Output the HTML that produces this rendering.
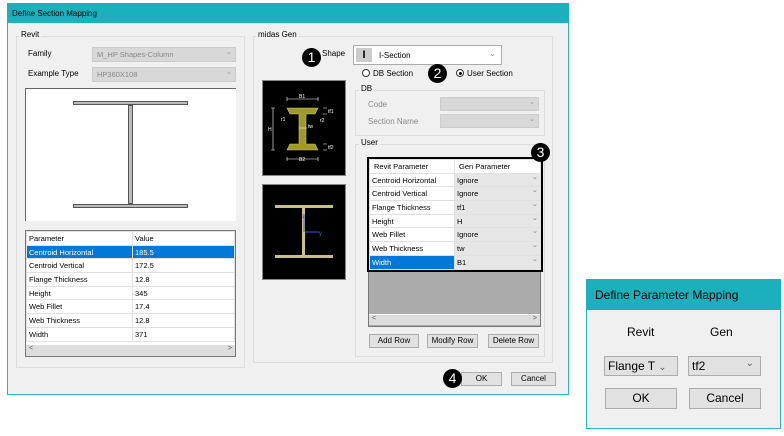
<!DOCTYPE html>
<html><head><style>
*{box-sizing:border-box;margin:0;padding:0}
body{width:784px;height:436px;background:#fff;position:relative;font-family:"Liberation Sans",sans-serif;font-size:8px;color:#000;overflow:hidden}
.a{position:absolute}
.grp{position:absolute;border:1px solid #dcdcdc}
.lbl{position:absolute;background:#f0f0f0;padding:0 2px;font-size:8px}
.cb{position:absolute;background:#d8d8d8;border:1px solid #ccc;color:#888;font-size:7.5px;padding:2px 4px}
.cb:after{content:"⌄";position:absolute;right:3px;top:-1px;color:#999}
.btn{position:absolute;background:#e1e1e1;border:1px solid #adadad;text-align:center;font-size:8px}
.num{position:absolute;width:19px;height:19px;border-radius:50%;background:#000;color:#fff;font-size:14px;text-align:center;line-height:19px}
table{border-collapse:collapse;font-size:7.5px}
td{height:13.7px;border:1px solid #e0e0e0;padding:0 2px;white-space:nowrap}
.sel td{background:#0078d7;color:#fff}
.dd{background:#e6e6e6;position:relative}
.dd:after{content:"⌄";position:absolute;right:2px;top:-2px;color:#888}
</style></head><body>
<div class="a" style="left:7px;top:3px;width:562px;height:392px;background:#f0f0f0;border:1px solid #2bb5c0"></div>
<div class="a" style="left:7px;top:3px;width:562px;height:20px;background:#1bb0bc;color:#000;font-size:8px;padding:6px 5px">Define Section Mapping</div>

<div class="grp" style="left:16px;top:36px;width:229px;height:332px"></div>
<div class="lbl" style="left:19px;top:30px">Revit</div>
<div class="a" style="left:28px;top:49px">Family</div>
<div class="cb" style="left:92px;top:47px;width:144px;height:15px">M_HP Shapes-Column</div>
<div class="a" style="left:28px;top:69px">Example Type</div>
<div class="cb" style="left:92px;top:67px;width:144px;height:15px">HP360X108</div>
<div class="a" style="left:25px;top:88px;width:211px;height:133px;background:#fff;border-top:1px solid #666;border-left:1px solid #666"></div>
<div class="a" style="left:73px;top:101px;width:115px;height:4px;background:#bbb;border:1px solid #555"></div>
<div class="a" style="left:128px;top:105px;width:5px;height:99px;background:#bbb;border:1px solid #555"></div>
<div class="a" style="left:73px;top:204px;width:115px;height:4px;background:#bbb;border:1px solid #555"></div>

<div class="a" style="left:25px;top:230px;width:211px;height:127px;background:#fff;border:1px solid #777">
<table style="width:209px"><tr><td style="width:106px;height:12px">Parameter</td><td>Value</td></tr>
<tr class="sel"><td>Centroid Horizontal</td><td>185.5</td></tr>
<tr><td>Centroid Vertical</td><td>172.5</td></tr>
<tr><td>Flange Thickness</td><td>12.8</td></tr>
<tr><td>Height</td><td>345</td></tr>
<tr><td>Web Fillet</td><td>17.4</td></tr>
<tr><td>Web Thickness</td><td>12.8</td></tr>
<tr><td>Width</td><td>371</td></tr></table>
<div class="a" style="left:0;top:114px;width:209px;height:11px;background:#ddd;font-size:7px;color:#555;padding:0 3px">&lt;<span style="float:right">&gt;</span></div>
</div>

<div class="grp" style="left:253px;top:36px;width:300px;height:327px"></div>
<div class="lbl" style="left:256px;top:30px">midas Gen</div>
<div class="num" style="left:302px;top:48px">1</div>
<div class="a" style="left:322px;top:49px">Shape</div>
<div class="a" style="left:353px;top:45px;width:149px;height:20px;background:#fff;border:1px solid #aaa;padding:5px 0 0 25px">I-Section<span style="position:absolute;right:5px;top:3px;color:#888">⌄</span></div>
<div class="a" style="left:356px;top:48px;width:16px;height:14px;background:#ccc;font-weight:bold;font-size:11px;text-align:center;line-height:14px">I</div>
<div class="a" style="left:362px;top:69px;width:8px;height:8px;border:1px solid #333;border-radius:50%;background:#fff"></div>
<div class="a" style="left:373px;top:69px">DB Section</div>
<div class="num" style="left:428px;top:64px">2</div>
<div class="a" style="left:456px;top:69px;width:8px;height:8px;border:1px solid #333;border-radius:50%;background:#fff"><div style="margin:1.5px;width:3px;height:3px;border-radius:50%;background:#000"></div></div>
<div class="a" style="left:467px;top:69px">User Section</div>

<div class="a" style="left:262px;top:80px;width:84px;height:96px;background:#000;border:1px solid #888">
<svg width="84" height="96"><path d="M24 27h31l-3 6h-9v30h9l3 6H24l3-6h9V33h-9z" fill="#a09a28" stroke="#cbc47a" stroke-width=".6"/>
<g stroke="#fff" stroke-width=".6" fill="none"><path d="M24 18h31M24 16v4M55 16v4M24 78h31M24 76v4M55 76v4M10 27v42M8 27h4M8 69h4M60 27h4M60 33h4M60 63h4M60 69h4M36 47h8"/></g>
<g fill="#fff" font-size="5"><text x="36" y="17">B1</text><text x="36" y="80">B2</text><text x="5" y="50">H</text><text x="65" y="32">tf1</text><text x="65" y="68">tf2</text><text x="18" y="40">r1</text><text x="57" y="41">r2</text><text x="45" y="47">tw</text></g></svg></div>
<div class="a" style="left:262px;top:184px;width:84px;height:96px;background:#000;border:1px solid #888">
<svg width="84" height="96"><g fill="#c8c088"><rect x="12" y="20" width="58" height="3"/><rect x="12" y="70" width="58" height="3"/><rect x="39" y="23" width="3" height="47"/></g><path d="M42 47h14M41 47V30" stroke="#3a5ae0" stroke-width="1"/><text x="56" y="50" fill="#3a5ae0" font-size="6">y</text><text x="39" y="33" fill="#3a5ae0" font-size="6">z</text></svg></div>

<div class="grp" style="left:355px;top:90px;width:190px;height:46px"></div>
<div class="lbl" style="left:359px;top:84px">DB</div>
<div class="a" style="left:368px;top:100px;color:#888">Code</div>
<div class="cb" style="left:440px;top:97px;width:99px;height:14px"></div>
<div class="a" style="left:368px;top:117px;color:#888">Section Name</div>
<div class="cb" style="left:440px;top:114px;width:99px;height:14px"></div>

<div class="grp" style="left:355px;top:144px;width:190px;height:213px"></div>
<div class="lbl" style="left:359px;top:138px">User</div>
<div class="a" style="left:368px;top:157px;width:173px;height:170px;background:#ababab;border:1px solid #777"></div>
<div class="a" style="left:367px;top:157px;width:176px;height:115px;border:2px solid #000;background:#fff">
<table style="width:172px"><tr><td style="width:85px;height:12px;padding-left:4px">Revit Parameter</td><td style="padding-left:4px">Gen Parameter</td></tr>
<tr><td>Centroid Horizontal</td><td class="dd">Ignore</td></tr>
<tr><td>Centroid Vertical</td><td class="dd">Ignore</td></tr>
<tr><td>Flange Thickness</td><td class="dd">tf1</td></tr>
<tr><td>Height</td><td class="dd">H</td></tr>
<tr><td>Web Fillet</td><td class="dd">Ignore</td></tr>
<tr><td>Web Thickness</td><td class="dd">tw</td></tr>
<tr><td style="background:#0078d7;color:#fff">Width</td><td class="dd">B1</td></tr></table></div>
<div class="a" style="left:369px;top:314px;width:171px;height:11px;background:#ddd;font-size:7px;color:#555;padding:0 3px;border-top:1px solid #fff">&lt;<span style="float:right">&gt;</span></div>
<div class="num" style="left:531px;top:143px">3</div>
<div class="btn" style="left:369px;top:334px;width:50px;height:14px;line-height:12px">Add Row</div>
<div class="btn" style="left:427px;top:334px;width:51px;height:14px;line-height:12px">Modify Row</div>
<div class="btn" style="left:488px;top:334px;width:51px;height:14px;line-height:12px">Delete Row</div>
<div class="btn" style="left:461px;top:372px;width:41px;height:14px;line-height:12px">OK</div>
<div class="btn" style="left:511px;top:372px;width:45px;height:14px;line-height:12px">Cancel</div>
<div class="num" style="left:443px;top:369px">4</div>

<div class="a" style="left:586px;top:279px;width:195px;height:150px;background:#f0f0f0;border:1px solid #2bb5c0"></div>
<div class="a" style="left:586px;top:279px;width:195px;height:31px;background:#1bb0bc;font-size:12px;padding:9px 9px">Define Parameter Mapping</div>
<div class="a" style="left:627px;top:325px;font-size:12px">Revit</div>
<div class="a" style="left:710px;top:325px;font-size:12px">Gen</div>
<div class="a" style="left:604px;top:356px;width:74px;height:20px;background:#e1e1e1;border:1px solid #adadad;font-size:12px;padding:2px 3px">Flange T <span style="color:#666;font-size:10px">⌄</span></div>
<div class="a" style="left:688px;top:356px;width:73px;height:20px;background:#e1e1e1;border:1px solid #adadad;font-size:12px;padding:2px 3px">tf2<span style="position:absolute;right:6px;top:1px;color:#666;font-size:10px">⌄</span></div>
<div class="btn" style="left:605px;top:388px;width:72px;height:21px;font-size:12px;line-height:19px">OK</div>
<div class="btn" style="left:689px;top:388px;width:72px;height:21px;font-size:12px;line-height:19px">Cancel</div>
</body></html>
